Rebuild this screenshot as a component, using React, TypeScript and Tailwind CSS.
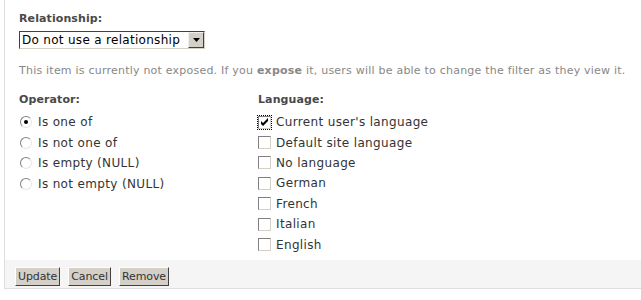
import React from 'react';

const operators = ['Is one of', 'Is not one of', 'Is empty (NULL)', 'Is not empty (NULL)'];
const languages = [
  "Current user's language",
  'Default site language',
  'No language',
  'German',
  'French',
  'Italian',
  'English'
];

const Radio = ({ checked }: { checked: boolean }) => (
  <span className="relative inline-block h-[12px] w-[12px] shrink-0 rounded-full border border-t-[#808080] border-l-[#808080] border-b-[#e8e6e0] border-r-[#e8e6e0] bg-white">
    {checked && (
      <span className="absolute left-[3px] top-[3px] h-[4px] w-[4px] rounded-full bg-black" />
    )}
  </span>
);

const Checkbox = ({ checked }: { checked: boolean }) => (
  <span
    className={
      'inline-flex shrink-0 ' +
      (checked ? 'outline-1 outline-dotted outline-black outline-offset-0' : '')
    }
  >
    <span className="relative inline-block h-[13px] w-[13px] border border-t-[#808080] border-l-[#808080] border-b-[#d4d0c8] border-r-[#d4d0c8] bg-white">
      {checked && (
        <svg viewBox="0 0 11 11" className="absolute left-0 top-0 h-[11px] w-[11px]">
          <path d="M2 4 L4 6 L9 1 L9 4 L4 9 L2 7 Z" fill="#000" />
        </svg>
      )}
    </span>
  </span>
);

const Button = ({ label }: { label: string }) => (
  <button className="h-[19px] border border-t-white border-l-white border-b-[#404040] border-r-[#404040] bg-[#d4d0c8] px-[2px] text-[11px] leading-[15px] tracking-[-0.1px] text-[#333]">
    {label}
  </button>
);

export default function App() {
  return (
    <div
      className="h-[300px] w-[641px] bg-white text-[#333]"
      style={{ fontFamily: '"DejaVu Sans", Verdana, sans-serif' }}
    >
      <div className="ml-[4px] border-b border-l border-[#ddd]">
        <div className="pl-[14px] pt-[10px]">
          <div className="text-[11px] font-bold leading-[18px] tracking-[0.1px] text-[#494949]">
            Relationship:
          </div>
          <div className="mt-[3px] flex h-[18px] w-[186px] border border-t-[#404040] border-l-[#404040] border-b-[#d4d0c8] border-r-[#d4d0c8] bg-white">
            <span className="flex-1 pl-[2px] text-[12px] leading-[16px] tracking-[0.3px] whitespace-nowrap text-black">
              Do not use a relationship
            </span>
            <span className="flex h-[16px] w-[16px] items-center justify-center border border-t-[#f0f0f0] border-l-[#f0f0f0] border-b-[#404040] border-r-[#404040] bg-[#d4d0c8]">
              <svg viewBox="0 0 7 4" className="h-[4px] w-[7px]">
                <path d="M0 0 H7 L3.5 4 Z" fill="#000" />
              </svg>
            </span>
          </div>
          <p className="mt-[15px] text-[11px] leading-[14px] tracking-[0.22px] whitespace-nowrap text-[#888]">
            This item is currently not exposed. If you <b className="font-bold">expose</b> it,
            users will be able to change the filter as they view it.
          </p>
          <div className="mt-[14px] flex">
            <div className="w-[239px]">
              <div className="text-[11px] font-bold leading-[16px] tracking-[0.1px] text-[#494949]">
                Operator:
              </div>
              <div className="mt-[6px] flex flex-col gap-[4.5px]">
                {operators.map((op, i) => (
                  <label
                    key={op}
                    className="flex h-[16px] items-center gap-[6px] pl-[1px] text-[12px] tracking-[0.35px]"
                  >
                    <Radio checked={i === 0} />
                    <span>{op}</span>
                  </label>
                ))}
              </div>
            </div>
            <div>
              <div className="text-[11px] font-bold leading-[16px] tracking-[0.1px] text-[#494949]">
                Language:
              </div>
              <div className="mt-[6px] flex flex-col gap-[4px]">
                {languages.map((lang, i) => (
                  <label
                    key={lang}
                    className="flex h-[16.4px] items-center gap-[5px] text-[12px] tracking-[0.35px]"
                  >
                    <Checkbox checked={i === 0} />
                    <span>{lang}</span>
                  </label>
                ))}
              </div>
            </div>
          </div>
        </div>
        <div className="mt-[7px] flex gap-[8px] bg-[#f5f5f5] pb-[2px] pl-[10px] pt-[7px]">
          <Button label="Update" />
          <Button label="Cancel" />
          <Button label="Remove" />
        </div>
      </div>
    </div>
  );
}
